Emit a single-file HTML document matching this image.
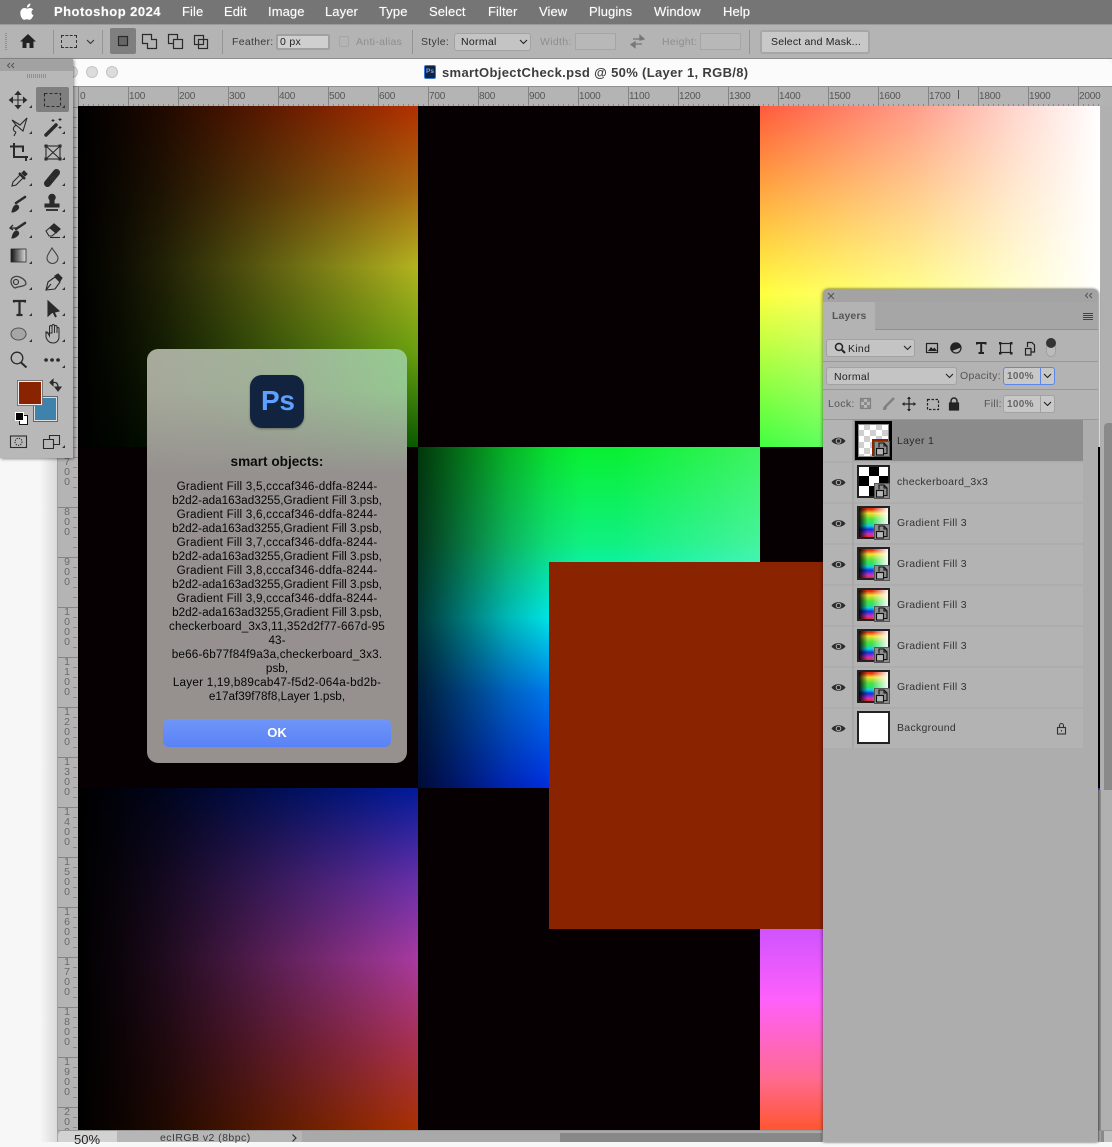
<!DOCTYPE html>
<html><head><meta charset="utf-8"><title>Photoshop</title>
<style>
html,body{margin:0;padding:0}
body{width:1112px;height:1142px;overflow:hidden;position:relative;background:#f7f7f7;font-family:"Liberation Sans",sans-serif;color:#333}
div,span,svg{position:absolute}
span{white-space:nowrap}
.m{top:4px;color:#fff;font-size:13px;line-height:15px;letter-spacing:.08px;text-shadow:0 0 1px rgba(255,255,255,.5)}
.o{font-size:10.5px;line-height:12px;top:36px;color:#3a3a3a;letter-spacing:.3px}
.d{color:#8e8e8e}
.sep{width:1px;background:#949494}
.inp{background:#cfcfcf;border:2px solid #a0a0a0;box-sizing:border-box;border-radius:2px}
.sel{background:#c4c4c4;border:1px solid #a2a2a2;box-sizing:border-box;border-radius:3px}
.rt{top:91px;font-size:10px;line-height:12px;color:#555;letter-spacing:-.2px}
.rv{left:62px;width:10px;text-align:center;font-size:10.5px;line-height:10px;color:#6a6a6a;white-space:normal}
.c{background:#060002}
.row{left:823px;width:260px;height:39px;background:#b3b3b3}
.lt{left:897px;font-size:10.5px;line-height:12px;color:#333;letter-spacing:.3px}
.th{left:857px;width:33px;height:33px;box-sizing:border-box;border:2px solid #222}
.g{background:linear-gradient(to right,rgba(0,0,0,.9),rgba(0,0,0,0) 30%,rgba(255,255,255,0) 45%,rgba(255,255,255,.95)),linear-gradient(to bottom,#e03010 4%,#f0e030 18%,#50e040 38%,#30e060 50%,#10d0e0 62%,#1030e0 74%,#d030c0 90%,#e03020)}
.bd{left:874px;width:16px;height:16px;background:#8d8d8d;border:1px solid #555;box-sizing:border-box}
.dlg{font-size:11.72px;line-height:14px;color:#050505;text-align:center;left:147px;width:260px}
.dlg span{position:static;display:block}
.a{letter-spacing:.2px}
</style></head><body>

<!-- canvas area -->
<div style="left:57px;top:87px;width:1055px;height:1055px;background:#b2b2b2"></div>
<div class="c" style="left:78px;top:106px;width:1022px;height:1024px"></div>
<div style="left:78px;top:106px;width:340px;height:341px;background:linear-gradient(to right,#000,rgba(0,0,0,.93) 12%,rgba(0,0,0,.82) 25%,rgba(0,0,0,.66) 40%,rgba(0,0,0,.46) 58%,rgba(0,0,0,.24) 78%,rgba(0,0,0,0)),linear-gradient(to bottom,#b23000,#a86a10 25%,#b3b320 47%,#6aa010 72%,#0a5a00)"></div>
<div style="left:760px;top:106px;width:340px;height:341px;background:linear-gradient(to right,rgba(255,255,255,0),rgba(255,255,255,.4) 45%,rgba(255,255,255,.75) 75%,#fff 100%),linear-gradient(to bottom,#ff5a3c,#ffb040 28%,#ffff40 55%,#40ff40)"></div>
<div style="left:418px;top:447px;width:342px;height:341px;background:linear-gradient(to right,rgba(0,0,0,.78),rgba(0,0,0,.52) 13%,rgba(0,0,0,.26) 26%,rgba(0,0,0,.08) 38%,rgba(0,0,0,0) 48%,rgba(255,255,255,0) 58%,rgba(255,255,255,.22)),linear-gradient(to bottom,#08f030,#10f080 28%,#00f6f6 50%,#0080ff 72%,#0030f0)"></div>
<div style="left:78px;top:788px;width:340px;height:342px;background:linear-gradient(to right,#000,rgba(0,0,0,.93) 12%,rgba(0,0,0,.82) 25%,rgba(0,0,0,.66) 40%,rgba(0,0,0,.46) 58%,rgba(0,0,0,.24) 78%,rgba(0,0,0,0)),linear-gradient(to bottom,#001a9a,#6a30a8 28%,#a83aa0 50%,#a83050 75%,#a83000)"></div>
<div style="left:760px;top:788px;width:340px;height:342px;background:linear-gradient(to bottom,#4040ff,#c050ff 35%,#ff60fa 62%,#ff6a90 85%,#ff5630)"></div>
<div style="left:549px;top:562px;width:300px;height:367px;background:#8a2300"></div>
<div style="left:1098px;top:790px;width:3px;height:340px;background:#8f8f8f"></div>

<!-- rulers -->
<div style="left:57px;top:87px;width:1045px;height:19px;background:#b4b4b4"></div>
<div style="left:78px;top:104px;width:1024px;height:2px;background:repeating-linear-gradient(to right,#888 0,#888 1px,transparent 1px,transparent 5px)"></div>
<div style="left:78px;top:87px;width:1024px;height:19px;background:repeating-linear-gradient(to right,#858585 0,#858585 1px,transparent 1px,transparent 50px)"></div>
<div style="left:958px;top:90px;width:1px;height:9px;background:#555"></div>
<span class="rt" style="left:80px">0</span><span class="rt" style="left:129px">100</span><span class="rt" style="left:179px">200</span><span class="rt" style="left:229px">300</span><span class="rt" style="left:279px">400</span><span class="rt" style="left:329px">500</span><span class="rt" style="left:379px">600</span><span class="rt" style="left:429px">700</span><span class="rt" style="left:479px">800</span><span class="rt" style="left:529px">900</span><span class="rt" style="left:579px">1000</span><span class="rt" style="left:629px">1100</span><span class="rt" style="left:679px">1200</span><span class="rt" style="left:729px">1300</span><span class="rt" style="left:779px">1400</span><span class="rt" style="left:829px">1500</span><span class="rt" style="left:879px">1600</span><span class="rt" style="left:929px">1700</span><span class="rt" style="left:979px">1800</span><span class="rt" style="left:1029px">1900</span><span class="rt" style="left:1079px;width:22px;overflow:hidden">2000</span>

<div style="left:57px;top:106px;width:21px;height:1024px;background:repeating-linear-gradient(to bottom,#858585 0,#858585 1px,transparent 1px,transparent 50px) 0 1px/100% 100% no-repeat #b4b4b4"></div>
<div style="left:73px;top:107px;width:4px;height:1023px;background:repeating-linear-gradient(to bottom,#8a8a8a 0,#8a8a8a 1px,transparent 1px,transparent 10px)"></div>
<div style="left:57px;top:106px;width:1px;height:1036px;background:#a0a0a0"></div>
<div class="rv" style="top:457px">7<br>0<br>0</div>
<div class="rv" style="top:507px">8<br>0<br>0</div>
<div class="rv" style="top:557px">9<br>0<br>0</div>
<div class="rv" style="top:607px">1<br>0<br>0<br>0</div>
<div class="rv" style="top:657px">1<br>1<br>0<br>0</div>
<div class="rv" style="top:707px">1<br>2<br>0<br>0</div>
<div class="rv" style="top:757px">1<br>3<br>0<br>0</div>
<div class="rv" style="top:807px">1<br>4<br>0<br>0</div>
<div class="rv" style="top:857px">1<br>5<br>0<br>0</div>
<div class="rv" style="top:907px">1<br>6<br>0<br>0</div>
<div class="rv" style="top:957px">1<br>7<br>0<br>0</div>
<div class="rv" style="top:1007px">1<br>8<br>0<br>0</div>
<div class="rv" style="top:1057px">1<br>9<br>0<br>0</div>
<div class="rv" style="top:1107px;height:23px;overflow:hidden">2<br>0<br>0<br>0</div>

<!-- left desktop shadow -->
<div style="left:40px;top:87px;width:17px;height:1055px;background:linear-gradient(to right,rgba(0,0,0,0),rgba(0,0,0,.12))"></div>

<!-- right scrollbar -->
<div style="left:1101px;top:106px;width:11px;height:1024px;background:#b0b0b0"></div>
<div style="left:1104px;top:423px;width:8px;height:367px;background:#8a8a8a;border-radius:4px 0 0 0"></div>

<!-- status bar -->
<div style="left:57px;top:1130px;width:1055px;height:12px;background:#a9a9a9"></div>
<div style="left:58px;top:1130px;width:59px;height:12px;background:#d2d2d2;border-radius:6px 0 0 0"></div>
<div style="left:117px;top:1130px;width:185px;height:12px;background:#b6b6b6"></div>
<div style="left:560px;top:1133px;width:262px;height:9px;background:#888"></div>
<div style="left:1104px;top:1130px;width:8px;height:12px;background:#c0c0c0"></div>
<div style="left:1101px;top:1130px;width:3px;height:12px;background:#8a8a8a"></div>
<div style="left:57px;top:1130px;width:1055px;height:1px;background:#9a9a9a"></div>
<span style="left:74px;top:1132px;font-size:13px;line-height:15px;color:#222">50%</span>
<span style="left:160px;top:1132px;font-size:10.5px;line-height:12px;color:#3a3a3a;letter-spacing:.45px">ecIRGB v2 (8bpc)</span>
<svg style="left:290px;top:1134px" width="8" height="8"><path d="M2.5 0.5L6 4L2.5 7.5" fill="none" stroke="#333" stroke-width="1.2"/></svg>

<!-- title bar -->
<div style="left:57px;top:59px;width:1055px;height:28px;background:#fbfbfb;border-radius:8px 8px 0 0;border-bottom:1px solid #8f8f8f;box-sizing:border-box"></div>
<div style="left:66px;top:66px;width:12px;height:12px;border-radius:50%;background:#dcdcdc;border:1px solid #c4c4c4;box-sizing:border-box"></div>
<div style="left:86px;top:66px;width:12px;height:12px;border-radius:50%;background:#dcdcdc;border:1px solid #c4c4c4;box-sizing:border-box"></div>
<div style="left:106px;top:66px;width:12px;height:12px;border-radius:50%;background:#dcdcdc;border:1px solid #c4c4c4;box-sizing:border-box"></div>
<div style="left:424px;top:65px;width:12px;height:14px;background:#12233f;border-radius:2px;border:1px solid #3a78d8;box-sizing:border-box"></div>
<span style="left:426px;top:68px;font-size:6.5px;line-height:8px;font-weight:bold;color:#6aa8ff">Ps</span>
<span style="left:442px;top:65px;font-size:13px;line-height:15px;font-weight:bold;color:#3d3d3d;letter-spacing:.33px">smartObjectCheck.psd @ 50% (Layer 1, RGB/8)</span>

<!-- menu bar -->
<div style="left:0;top:0;width:1112px;height:24px;background:#757575"></div>
<svg style="left:20px;top:3px" width="15" height="17" viewBox="0 0 15 17"><path d="M10.4 0.5c.1 1.2-.4 2.2-1 2.9-.7.8-1.6 1.2-2.5 1.1-.1-1.1.4-2.2 1-2.8.7-.7 1.7-1.2 2.5-1.2zM13.5 12.2c-.5 1.1-.7 1.5-1.3 2.4-.8 1.2-1.5 2.2-2.7 2.2-1 0-1.3-.6-2.6-.6s-1.7.6-2.7.6c-1.100 0-1.900-1-2.700-2.200C.2 12.300-.2 8.700 1.300 6.700c.8-1.100 2-1.700 3.200-1.700 1.200 0 1.900.6 2.900.6.9 0 1.500-.6 2.900-.6 1 0 2.100.5 2.900 1.500-2.500 1.400-2.100 4.900.3 5.700z" fill="#fff"/></svg>
<span class="m" style="left:54px;font-weight:bold;letter-spacing:.47px">Photoshop 2024</span>
<span class="m" style="left:182px">File</span><span class="m" style="left:224px">Edit</span><span class="m" style="left:268px">Image</span><span class="m" style="left:325px">Layer</span><span class="m" style="left:379px">Type</span><span class="m" style="left:429px">Select</span><span class="m" style="left:488px">Filter</span><span class="m" style="left:539px">View</span><span class="m" style="left:589px">Plugins</span><span class="m" style="left:654px">Window</span><span class="m" style="left:723px">Help</span>

<!-- options bar -->
<div style="left:0;top:24px;width:1112px;height:35px;background:#b4b4b4;border-top:1px solid #9a9a9a;border-bottom:1px solid #8e8e8e;box-sizing:border-box"></div>
<div style="left:5px;top:33px;width:2px;height:18px;background:repeating-linear-gradient(to bottom,#8f8f8f 0,#8f8f8f 1px,transparent 1px,transparent 2px)"></div>
<svg style="left:19px;top:32px" width="18" height="18"><path d="M9 2L1 9.500H3.500V16H7.500V11H10.500V16H14.500V9.500H17Z" fill="#222"/></svg>
<div class="sep" style="left:53px;top:30px;height:24px"></div>
<div style="left:61px;top:35px;width:16px;height:13px;border:1px dashed #333;box-sizing:border-box"></div>
<svg style="left:86px;top:39px" width="9" height="6"><path d="M1 1L4.500 4.500L8 1" fill="none" stroke="#333" stroke-width="1.100"/></svg>
<div class="sep" style="left:102px;top:30px;height:24px"></div>
<div style="left:110px;top:28px;width:26px;height:26px;background:#7f7f7f;border-radius:2px"></div>
<svg style="left:110px;top:28px" width="110" height="26" fill="none" stroke="#2a2a2a" stroke-width="1.200">
<rect x="8.500" y="8.500" width="9" height="9" fill="#666" />
<path d="M32.500 6.500H41.500V11.500H46.500V20.500H37.500V15.500H32.500Z"/>
<rect x="58.500" y="6.500" width="9" height="9"/><rect x="63.500" y="11.500" width="9" height="9" fill="#b4b4b4"/>
<rect x="84.500" y="7.500" width="9" height="9"/><rect x="88.500" y="11.500" width="9" height="9"/>
</svg>
<div class="sep" style="left:222px;top:30px;height:24px"></div>
<span class="o" style="left:232px">Feather:</span>
<div class="inp" style="left:276px;top:34px;width:54px;height:16px"></div>
<span class="o" style="left:280px;color:#222">0 px</span>
<div style="left:339px;top:36px;width:10px;height:11px;border:1px solid #a5a5a5;box-sizing:border-box;border-radius:2px"></div>
<span class="o d" style="left:356px">Anti-alias</span>
<div class="sep" style="left:412px;top:30px;height:24px"></div>
<span class="o" style="left:421px">Style:</span>
<div class="sel" style="left:454px;top:33px;width:77px;height:18px"></div>
<span class="o" style="left:461px;color:#222">Normal</span>
<svg style="left:519px;top:39px" width="9" height="6"><path d="M1 1L4.500 4.500L8 1" fill="none" stroke="#222" stroke-width="1.100"/></svg>
<span class="o d" style="left:540px">Width:</span>
<div style="left:575px;top:33px;width:41px;height:17px;border:1px solid #a5a5a5;background:#b8b8b8;box-sizing:border-box"></div>
<svg style="left:630px;top:34px" width="15" height="15" fill="none" stroke="#777" stroke-width="1.300"><path d="M3 5H11"/><path d="M10 1.500L14 5L10 6Z" fill="#777"/><path d="M12 10H4"/><path d="M5 8L1 10.500L5 13.500Z" fill="#777"/></svg>
<span class="o d" style="left:662px">Height:</span>
<div style="left:700px;top:33px;width:41px;height:17px;border:1px solid #a5a5a5;background:#b8b8b8;box-sizing:border-box"></div>
<div class="sep" style="left:749px;top:30px;height:24px"></div>
<div style="left:760px;top:30px;width:110px;height:24px;background:#c8c8c8;border:2px solid #a6a6a6;box-sizing:border-box;border-radius:3px"></div>
<span class="o" style="left:771px;color:#222;letter-spacing:.2px">Select and Mask...</span>

<!-- toolbox -->
<div style="left:0;top:59px;width:73px;height:399px;background:#b8b8b8;box-shadow:1px 1px 3px rgba(0,0,0,.45)"></div>
<div style="left:0;top:59px;width:73px;height:12px;background:#a2a2a2"></div>
<svg style="left:6px;top:62px" width="9" height="7" fill="none" stroke="#555"><path d="M4 1L1.500 3.500L4 6M8 1L5.500 3.500L8 6"/></svg>
<div style="left:27px;top:74px;width:20px;height:4px;background:repeating-linear-gradient(to right,#8f8f8f 0,#8f8f8f 1px,transparent 1px,transparent 2px)"></div>
<div style="left:36px;top:87px;width:33px;height:25px;background:#7f7f7f;border-radius:2px"></div>
<svg style="left:0;top:80px" width="73" height="378" viewBox="0 80 73 378" fill="none" stroke="#2a2a2a" stroke-width="1.100">
<g fill="#333" stroke="none">
<path d="M32 105v3h-3zM65 105v3h-3zM32 131v3h-3zM65 131v3h-3zM32 157v3h-3zM65 157v3h-3zM32 183v3h-3zM65 183v3h-3zM32 209v3h-3zM65 209v3h-3zM32 235v3h-3zM65 235v3h-3zM32 261v3h-3zM65 261v3h-3zM32 287v3h-3zM65 287v3h-3zM32 313v3h-3zM65 313v3h-3zM32 339v3h-3zM65 339v3h-3zM65 365v3h-3zM65 445v3h-3z"/>
</g>
<path d="M18 92V108M10 100H26"/><path d="M15.500 94.500L18 91.500L20.500 94.500ZM15.500 105.500L18 108.500L20.500 105.500ZM12.500 97.500L9.500 100L12.500 102.500ZM23.500 97.500L26.500 100L23.500 102.500Z" fill="#2a2a2a"/>
<rect x="44.500" y="93.500" width="16" height="13" stroke-dasharray="3 2"/>
<path d="M12 120L20 125L27 118L23 131L16 125L12 120M16 125C12 128 13 131 16 132M16 132L14 136"/>
<path d="M46 135L56 125" stroke-width="3.500" stroke-linecap="round"/><path d="M53 119V122M51.500 120.500H54.500M60 118V121M58.500 119.500H61.500M60 126V129M58.500 127.500H61.500" stroke-width="1"/>
<path d="M10 146.500H14M14 143V157H26V161M14 146.500H23V152M22 157H28" stroke-width="2"/>
<rect x="46" y="146" width="14" height="13"/><path d="M46 146L60 159M60 146L46 159"/><path d="M45 145h2v2h-2zM59 145h2v2h-2zM45 158h2v2h-2zM59 158h2v2h-2z" fill="#2a2a2a"/>
<path d="M13 182L20 175L23 178L16 185L12 186Z"/><path d="M19 173L25 179" stroke-width="2.500"/><path d="M22 173L24 171L27 174L25 176Z" fill="#2a2a2a"/>
<path d="M47.500 183.500L56.500 172.500" stroke-width="7" stroke-linecap="round" stroke="#2a2a2a"/><path d="M50.500 178.500h.1M52.500 180h.1M52 176.500h.1M54 178h.1" stroke="#ccc" stroke-width="1.300"/>
<path d="M16 203L25 197" stroke-width="2.500" stroke-linecap="round"/><path d="M12 212C13 207 15 205 17 205C19 206 19 208 18 209C16 211 14 212 12 212Z" fill="#2a2a2a"/>
<path d="M50 200a3.200 3.200 0 1 1 4 0L54 204H59V207H45V204H50Z" fill="#2a2a2a"/><path d="M46 210H58" stroke-width="1.800"/>
<path d="M16 229L25 223" stroke-width="2.500" stroke-linecap="round"/><path d="M12 238C13 233 15 231 17 231C19 232 19 234 18 235C16 237 14 238 12 238Z" fill="#2a2a2a"/><path d="M10 228H17M13 225L10 228L13 230" stroke-width="1.300"/><path d="M22 232h.1M24 235h.1M21 237h.1" stroke-width="1.300"/>
<path d="M46 231L54 224L60 229L52 236H49Z"/><path d="M50 228L54 224L60 229L56 233Z" fill="#2a2a2a"/><path d="M50 237.500H60"/>
<defs><linearGradient id="gr"><stop offset="0" stop-color="#111"/><stop offset="1" stop-color="#ddd"/></linearGradient></defs>
<rect x="11" y="249" width="15" height="13" fill="url(#gr)" stroke="#2a2a2a" stroke-width=".8"/>
<path d="M52 248C49 253 47 255 47 258A5 5 0 0 0 58 258C58 255 55 253 52 248Z" stroke="#444"/>
<path d="M14 277C18 275 26 279 26 284C24 287 19 286 15 288C11 286 9 279 14 277Z" stroke="#444" stroke-width="1.300"/><circle cx="16" cy="282" r="2.500"/>
<path d="M46 290L48 282L55 277L60 282L55 289Z"/><path d="M46 290L51 284"/><path d="M55 276L58 274L62 278L60 281Z" fill="#2a2a2a"/>
<path d="M14 302.500V301H25V302.500M19.500 301V315M16.500 315H22.500" stroke-width="2.200"/>
<path d="M48 301V316L52 312.500L55 312L59 311Z" fill="#2a2a2a"/><path d="M53 311L56 317" stroke-width="2"/>
<ellipse cx="18.500" cy="334" rx="7.500" ry="6" fill="#a6a6a6" stroke="#555"/>
<path d="M46 333V337C47 341 50 343 53 343C57 343 59 340 59 337V329C59 327 57 327 57 329V333M57 333V327C57 325 54.500 325 54.500 327V333M54.500 333V326C54.500 324 52 324 52 326V333M52 333V327C52 325 49.500 325 49.500 327V336L47.500 332.500C46.500 331 45.500 332 46 333Z" stroke-width="1"/>
<circle cx="17" cy="358" r="5.800" stroke-width="1.300"/><path d="M21 362.500L26.500 367.500" stroke-width="2"/>
<path d="M46 360h.1M52 360h.1M58 360h.1" stroke-width="3.600" stroke-linecap="round"/>
<path d="M51 382.500H55C57 382.500 58 384 58 388" stroke-width="1.300"/><path d="M53 379.500L50 382.500L53 385.500ZM55 387H61L58 391Z" fill="#2a2a2a"/>
<rect x="10.500" y="436" width="16" height="11.500"/><circle cx="18.500" cy="441.800" r="3.500" stroke-dasharray="1.200 1.200"/>
<path d="M43.500 439.500H53.500V448.500H43.500Z"/><path d="M49.500 439.500V435.500H59.500V444.500H53.500"/>
</svg>
<div style="left:33px;top:396px;width:25px;height:26px;background:#3f82ab;border:1px solid #666;outline:1px solid #ddd;outline-offset:-2px;box-sizing:border-box"></div>
<div style="left:17px;top:380px;width:26px;height:26px;background:#8a2300;border:1px solid #777;outline:1px solid #eee;outline-offset:-2px;box-sizing:border-box"></div>
<div style="left:19px;top:415px;width:7px;height:8px;background:#fff;border:1px solid #111"></div>
<div style="left:15px;top:412px;width:7px;height:7px;background:#000;border:1px solid #fff"></div>

<!-- dialog -->
<div style="left:147px;top:349px;width:260px;height:414px;border-radius:11px;background:linear-gradient(to bottom,rgba(150,145,143,0) 0,rgba(150,145,143,.1) 10%,rgba(150,145,143,1) 30%,#96918f 100%),linear-gradient(100deg,#a8aa9c 0,#a0b498 40%,#8fd88c 100%)"></div>
<div style="left:250px;top:375px;width:54px;height:53px;border-radius:12px;background:#12233f;box-shadow:0 1px 2px rgba(0,0,0,.35)"></div>
<span style="left:261px;top:385px;font-size:28px;line-height:32px;font-weight:bold;color:#5da0ff;letter-spacing:-.3px">Ps</span>
<span style="left:147px;width:260px;text-align:center;top:454px;font-size:13.6px;line-height:15px;font-weight:bold;color:#0b0b0b">smart objects:</span>
<div class="dlg" style="top:480px">
<span class="a">Gradient Fill 3,5,cccaf346-ddfa-8244-</span>
<span>b2d2-ada163ad3255,Gradient Fill 3.psb,</span>
<span class="a">Gradient Fill 3,6,cccaf346-ddfa-8244-</span>
<span>b2d2-ada163ad3255,Gradient Fill 3.psb,</span>
<span class="a">Gradient Fill 3,7,cccaf346-ddfa-8244-</span>
<span>b2d2-ada163ad3255,Gradient Fill 3.psb,</span>
<span class="a">Gradient Fill 3,8,cccaf346-ddfa-8244-</span>
<span>b2d2-ada163ad3255,Gradient Fill 3.psb,</span>
<span class="a">Gradient Fill 3,9,cccaf346-ddfa-8244-</span>
<span>b2d2-ada163ad3255,Gradient Fill 3.psb,</span>
<span style="letter-spacing:.14px">checkerboard_3x3,11,352d2f77-667d-95</span>
<span>43-</span>
<span style="letter-spacing:.17px">be66-6b77f84f9a3a,checkerboard_3x3.</span>
<span>psb,</span>
<span style="letter-spacing:.22px">Layer 1,19,b89cab47-f5d2-064a-bd2b-</span>
<span>e17af39f78f8,Layer 1.psb,</span>
</div>
<div style="left:163px;top:719px;width:228px;height:28px;border-radius:6px;background:linear-gradient(to bottom,#6f96f7,#5a82f6)"></div>
<span style="left:163px;width:228px;text-align:center;top:725px;font-size:13px;line-height:15px;color:#fff;font-weight:bold">OK</span>

<!-- layers panel -->
<div style="left:823px;top:289px;width:275px;height:853px;background:#adadad;border-radius:5px 5px 0 0;box-shadow:-1px 0 3px rgba(0,0,0,.35),1px 0 2px rgba(0,0,0,.4)"></div>
<div style="left:823px;top:289px;width:275px;height:13px;background:#a3a3a3;border-radius:5px 5px 0 0"></div>
<svg style="left:827px;top:292px" width="8" height="8" stroke="#555" stroke-width="1.100"><path d="M1 1L7 7M7 1L1 7"/></svg>
<svg style="left:1084px;top:292px" width="9" height="7" fill="none" stroke="#555"><path d="M4 1L1.500 3.500L4 6M8 1L5.500 3.500L8 6"/></svg>
<div style="left:823px;top:302px;width:275px;height:28px;background:#a6a6a6;border-bottom:1px solid #8f8f8f;box-sizing:border-box"></div>
<div style="left:823px;top:302px;width:52px;height:28px;background:#b3b3b3"></div>
<span style="left:832px;top:310px;font-size:10.5px;line-height:12px;font-weight:bold;color:#555;letter-spacing:.1px">Layers</span>
<div style="left:1083px;top:313px;width:10px;height:1px;background:#444;box-shadow:0 2px 0 #444,0 4px 0 #444,0 6px 0 #444"></div>
<div style="left:823px;top:330px;width:275px;height:90px;background:#b3b3b3"></div>
<div style="left:823px;top:361px;width:275px;height:1px;background:#989898"></div>
<div style="left:823px;top:389px;width:275px;height:1px;background:#989898"></div>
<div style="left:823px;top:419px;width:275px;height:1px;background:#989898"></div>
<div class="sel" style="left:826px;top:339px;width:89px;height:18px"></div>
<svg style="left:834px;top:342px" width="12" height="12" fill="none" stroke="#222" stroke-width="1.500"><circle cx="5" cy="5" r="3.500"/><path d="M8 8L11 11" stroke-width="2"/></svg>
<span class="o" style="left:848px;top:343px;color:#222">Kind</span>
<svg style="left:903px;top:345px" width="9" height="6"><path d="M1 1L4.500 4.500L8 1" fill="none" stroke="#222" stroke-width="1.100"/></svg>
<svg style="left:925px;top:340px" width="115" height="18" fill="none" stroke="#222" stroke-width="1.200">
<rect x="1.500" y="3.500" width="11" height="9"/><path d="M3 11L6 7L8 9L9.500 7.500L12 11Z" fill="#222" stroke="none"/>
<circle cx="31" cy="8" r="5"/><path d="M31 13A5 5 0 0 1 26.500 9L35.500 5.500A5 5 0 0 1 31 13Z" fill="#222" transform="rotate(180 31 8)"/>
<path d="M52 4.500V3H60.500V4.500M56.200 3V13M53.500 13H59" stroke-width="2"/>
<rect x="75.500" y="3.500" width="10" height="9"/><path d="M74 2h2.500v2.500H74zM85 2h2.500v2.500H85zM74 12h2.500v2.500H74zM85 12h2.500v2.500H85z" fill="#222" stroke="none"/>
<path d="M102.500 7V2.500H107L109.500 5V12H106M100.500 8.500H106V15H100.500Z"/>
</svg>
<div style="left:1046px;top:338px;width:10px;height:19px;border-radius:5px;background:#bcbcbc;border:1px solid #a0a0a0;box-sizing:border-box"></div>
<div style="left:1046px;top:338px;width:10px;height:10px;border-radius:50%;background:#333"></div>

<div class="sel" style="left:826px;top:367px;width:131px;height:18px"></div>
<span class="o" style="left:834px;top:371px;color:#222">Normal</span>
<svg style="left:945px;top:373px" width="9" height="6"><path d="M1 1L4.500 4.500L8 1" fill="none" stroke="#222" stroke-width="1.100"/></svg>
<span class="o" style="left:960px;top:370px;color:#555">Opacity:</span>
<div style="left:1003px;top:367px;width:52px;height:18px;background:#c8c8c8;border:1px solid #5b87e8;box-sizing:border-box;border-radius:3px"></div>
<div style="left:1040px;top:367px;width:1px;height:18px;background:#5b87e8"></div>
<span class="o" style="left:1007px;top:371px;color:#666;font-weight:bold;font-size:10px">100%</span>
<svg style="left:1043px;top:373px" width="9" height="6"><path d="M1 1L4.500 4.500L8 1" fill="none" stroke="#222" stroke-width="1.100"/></svg>

<span class="o" style="left:828px;top:398px;color:#555">Lock:</span>
<svg style="left:858px;top:395px" width="105" height="18" fill="none" stroke="#222" stroke-width="1.200">
<rect x="2.500" y="3.500" width="10" height="10" stroke="#808080" fill="#b8b8b8"/><path d="M3 4h3v3H3zM9 4h3v3H9zM6 7h3v3H6zM3 10h3v3H3zM9 10h3v3H9z" fill="#8c8c8c" stroke="none"/>
<path d="M27 12L36 3" stroke="#808080" stroke-width="2.500"/><path d="M25 15C25 12 26 11 28 11L29 13C28 15 27 15 25 15Z" fill="#808080" stroke="none"/>
<path d="M51 2V16M44.500 9H57.500"/><path d="M49 4L51 1.500L53 4ZM49 14L51 16.500L53 14ZM46.500 7L44 9L46.500 11ZM55.500 7L58 9L55.500 11Z" fill="#222" stroke="none"/>
<rect x="69.500" y="4.500" width="11" height="10" stroke-dasharray="2.500 1.500"/>
<rect x="91.500" y="8" width="9" height="7" fill="#222"/><path d="M93 8V6A3 3 0 0 1 99 6V8" stroke-width="1.500"/>
</svg>
<span class="o" style="left:984px;top:398px;color:#555">Fill:</span>
<div style="left:1003px;top:395px;width:52px;height:18px;background:#c8c8c8;border:1px solid #a2a2a2;box-sizing:border-box;border-radius:3px"></div>
<div style="left:1040px;top:395px;width:1px;height:18px;background:#a2a2a2"></div>
<span class="o" style="left:1007px;top:399px;color:#666;font-weight:bold;font-size:10px">100%</span>
<svg style="left:1043px;top:401px" width="9" height="6"><path d="M1 1L4.500 4.500L8 1" fill="none" stroke="#222" stroke-width="1.100"/></svg>

<!-- layer rows -->
<div class="row" style="top:420px;height:41px"></div>
<div style="left:854px;top:420px;width:229px;height:41px;background:#8b8b8b"></div>
<div class="row" style="top:463px"></div><div class="row" style="top:504px"></div><div class="row" style="top:545px"></div><div class="row" style="top:586px"></div><div class="row" style="top:627px"></div><div class="row" style="top:668px"></div><div class="row" style="top:709px"></div>
<div style="left:852px;top:420px;width:2px;height:328px;background:#a8a8a8"></div>
<svg style="left:0;top:0" width="1112" height="760">
<defs>
<g id="eye"><path d="M-7 0C-4-4.500 4-4.500 7 0C4 4.500-4 4.500-7 0Z" fill="#2c2c2c"/><circle r="2.800" fill="#b3b3b3"/><circle r="1.800" fill="#2c2c2c"/></g>
</defs>
<use href="#eye" x="838.500" y="441"/><use href="#eye" x="838.500" y="482.500"/><use href="#eye" x="838.500" y="523.500"/><use href="#eye" x="838.500" y="564.500"/><use href="#eye" x="838.500" y="605.500"/><use href="#eye" x="838.500" y="646.500"/><use href="#eye" x="838.500" y="687.500"/><use href="#eye" x="838.500" y="728.500"/>
</svg>

<div style="left:855px;top:421px;width:37px;height:39px;box-sizing:border-box;border:3px solid #000;outline:1px solid #8b8b8b;outline-offset:-4px;background:repeating-conic-gradient(#cfcfcf 0 25%,#fff 0 50%) 0 0/12px 12px"></div>
<div style="left:872px;top:439px;width:16px;height:17px;background:#8a2300"></div>
<div style="left:875px;top:442px;width:13px;height:14px;background:repeating-conic-gradient(#cfcfcf 0 25%,#fff 0 50%) 0 0/12px 12px"></div>
<div class="th" style="top:465px;background:#fff"></div>
<div style="left:869px;top:467px;width:10px;height:9px;background:#000"></div>
<div style="left:859px;top:476px;width:10px;height:10px;background:#000"></div>
<div style="left:879px;top:476px;width:9px;height:10px;background:#000"></div>
<div style="left:869px;top:486px;width:10px;height:10px;background:#000"></div>
<div class="th g" style="top:506px"></div><div class="th g" style="top:547px"></div><div class="th g" style="top:588px"></div><div class="th g" style="top:629px"></div><div class="th g" style="top:670px"></div>
<div class="th" style="top:711px;background:#fff"></div>

<div class="bd" style="top:441px"></div><div class="bd" style="top:483px"></div><div class="bd" style="top:524px"></div><div class="bd" style="top:565px"></div><div class="bd" style="top:606px"></div><div class="bd" style="top:647px"></div><div class="bd" style="top:688px"></div>
<svg style="left:0;top:0" width="1112" height="760" fill="none" stroke="#111" stroke-width="1.100">
<defs><g id="so"><path d="M3 5.500V1H8L11 4V11.500H7.500"/><path d="M8 1V4H11"/><rect x=".5" y="6.500" width="7" height="6.500" fill="#b5b5b5"/></g></defs>
<use href="#so" x="876" y="442"/><use href="#so" x="876" y="484"/><use href="#so" x="876" y="525"/><use href="#so" x="876" y="566"/><use href="#so" x="876" y="607"/><use href="#so" x="876" y="648"/><use href="#so" x="876" y="689"/>
<rect x="1057.500" y="727.500" width="8" height="6.500" stroke="#333" stroke-width="1.100"/><path d="M1059.500 727.500V725.500A2 2 0 0 1 1063.500 725.500V727.500" stroke="#333" stroke-width="1.100"/><path d="M1061 730h1v1.500h-1z" fill="#333" stroke="none"/>
</svg>
<span class="lt" style="top:435px;color:#2a2a2a">Layer 1</span>
<span class="lt" style="top:476px">checkerboard_3x3</span>
<span class="lt" style="top:517px">Gradient Fill 3</span>
<span class="lt" style="top:558px">Gradient Fill 3</span>
<span class="lt" style="top:599px">Gradient Fill 3</span>
<span class="lt" style="top:640px">Gradient Fill 3</span>
<span class="lt" style="top:681px">Gradient Fill 3</span>
<span class="lt" style="top:722px">Background</span>
</body></html>
